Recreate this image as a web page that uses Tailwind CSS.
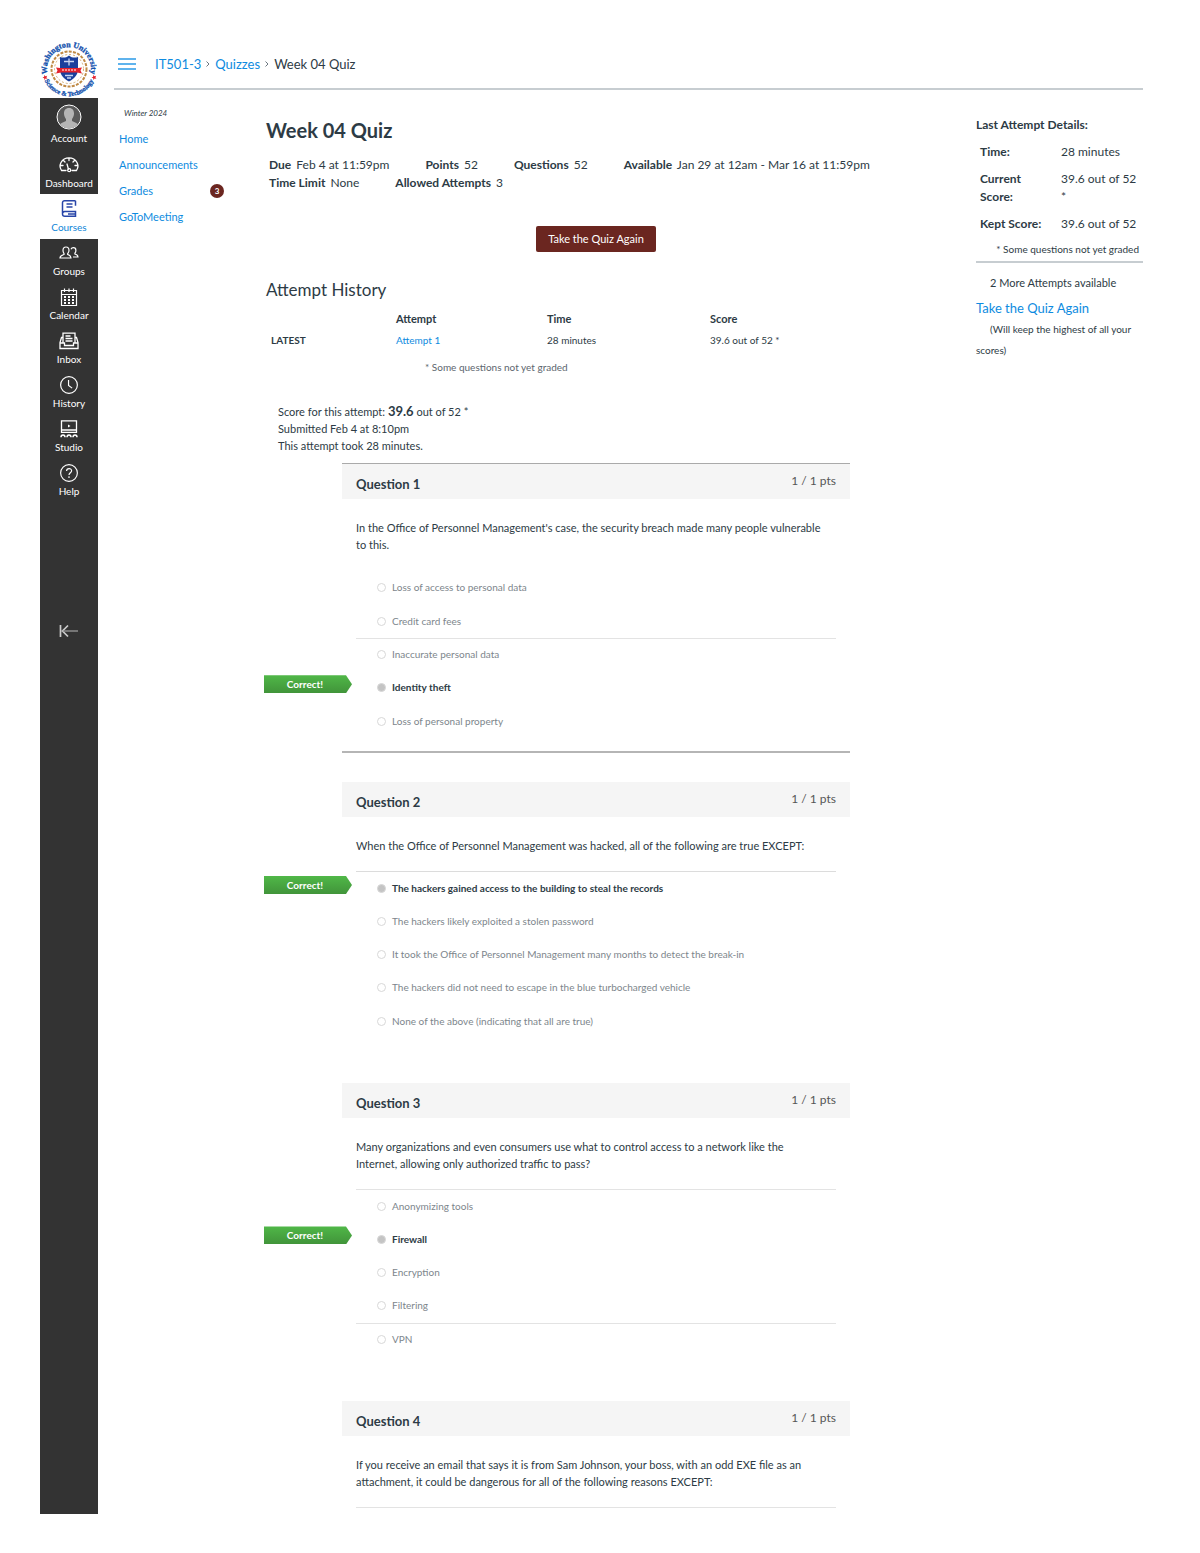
<!DOCTYPE html>
<html lang="en">
<head>
<meta charset="utf-8">
<meta name="viewport" content="width=device-width, initial-scale=1">
<title>Week 04 Quiz</title>
<script src="https://cdn.jsdelivr.net/npm/@tailwindcss/browser@4"></script>
</head>
<body class="bg-white p-10 font-['Lato',sans-serif] text-[#2d3b45]">
<div class="flex items-stretch">

  <!-- Global navigation -->
  <aside class="flex w-[58px] shrink-0 flex-col">
    <a href="#" aria-label="University home" class="block h-[58px]">
      <svg viewBox="0 0 58 58" class="h-[58px] w-[58px] overflow-visible">
        <defs>
          <path id="arcTop" d="M8.600 37.400A22 22 0 1 1 49.400 37.400"/>
          <path id="arcBottom" d="M3.500 38A27 27 0 0 0 54.500 38"/>
        </defs>
        <text font-family="Liberation Serif, serif" font-weight="700" font-size="8" fill="#1150ad" stroke="#1150ad" stroke-width=".3" text-anchor="middle"><textPath href="#arcTop" startOffset="50%">Washington University</textPath></text>
        <text font-family="Liberation Serif, serif" font-weight="700" font-size="6.500" fill="#1150ad" stroke="#1150ad" stroke-width=".3" text-anchor="middle"><textPath href="#arcBottom" startOffset="50%">Science &amp; Technology</textPath></text>
        <circle cx="29" cy="29" r="17.500" fill="none" stroke="#c08a45" stroke-width="2" stroke-dasharray="3 1.300"/>
        <circle cx="29" cy="29" r="14.500" fill="none" stroke="#d5ab73" stroke-width="1" stroke-dasharray="2 2"/>
        <path d="M29 15.500c3 2.500 6 2.500 9 1.500v12c0 6-4 10-9 12.500-5-2.500-9-6.500-9-12.500V17c3 1 6 1 9-1.500z" fill="#1a3f9c"/>
        <path d="M24 21.500h10M29 18.500v7M25 35.500h8M27 38h4" stroke="#c9d6f2" stroke-width="1.300"/>
        <path d="M16 27.500l4 .500h18l4-.500-1.500 3 1.500 3-5-1H21l-5 1 1.500-3z" fill="#e3222d"/>
        <path d="M22 30h14" stroke="#fff" stroke-width="1.200" stroke-dasharray="2 1"/>
        <path d="M4 35l1.500 1.300 1.700-.6-.8 1.600 1 1.500-1.800-.3L4.400 40l-.2-1.800-1.700-.8 1.700-.7zM53 35l1.500 1.300 1.700-.6-.8 1.600 1 1.500-1.800-.3-1.200 1.500-.2-1.800-1.700-.8 1.700-.7z" fill="#e3222d"/>
      </svg>
    </a>
    <nav aria-label="Global" class="flex grow flex-col bg-[#333] text-[10px] leading-3 text-white">
      <a href="#" class="flex h-[52px] flex-col items-center gap-[2px] pt-[6px]">
        <svg viewBox="0 0 26 26" class="h-[26px] w-[26px]"><circle cx="13" cy="13" r="12" fill="#5a5a5a" stroke="#fff"/><path d="M13 4c3.600 0 5.200 2.600 5 6-.2 2.600-1.300 4-2 5v2c2 1.300 4.600 1.300 6 3.500A12 12 0 0 1 4 20.500C5.400 18.300 8 18.300 10 17v-2c-.7-1-1.800-2.400-2-5-.2-3.400 1.400-6 5-6z" fill="#b5b5b5"/></svg>
        <span>Account</span>
      </a>
      <a href="#" class="flex h-11 flex-col items-center gap-[3px] pt-[6px]">
        <svg viewBox="0 0 20 18" class="h-[18px] w-5" fill="none" stroke="#fff" stroke-width="1.300" stroke-linecap="round"><path d="M7 14.500H2.500C.8 12 .6 9 2 6.500 3.600 3.500 6.600 1.800 10 1.800s6.400 1.700 8 4.700c1.400 2.500 1.200 5.500-.5 8H13M10 2v2.500M2 9.500h2M16 9.500h2M4.500 4.500L6 6M15.500 4.500L14 6"/><path d="M8 8l1.500 5.200"/><circle cx="10.200" cy="14.200" r="1.500"/></svg>
        <span>Dashboard</span>
      </a>
      <a href="#" class="flex h-[45px] flex-col items-center gap-[3px] bg-white pt-[5px] text-[#0e86d8]">
        <svg viewBox="0 0 18 19" class="h-[19px] w-[18px]" fill="none" stroke="#2845a8" stroke-width="1.500"><path d="M15.500 1.700H4.500a2 2 0 0 0-2 2V15a2.300 2.300 0 0 0 2.300 2.300h10.700v-4.800H4.800a2.200 2.200 0 0 0-2.300 2.200M15.500 1.700v5M6.500 5h6M6.500 8h6M8 15h7.500"/></svg>
        <span>Courses</span>
      </a>
      <a href="#" class="flex h-11 flex-col items-center gap-[3px] pt-[5px]">
        <svg viewBox="0 0 20 18" class="h-[18px] w-5" fill="none" stroke="#fff" stroke-width="1.200"><path d="M7 3c2 0 3 1.300 3 3.200 0 1.600-.5 2.600-1.300 3.300v1c1.500.7 3.300 1 3.300 3.500H1c0-2.500 2-2.800 4-3.500v-1C4.300 8.800 4 7.800 4 6.200 4 4.300 5 3 7 3z"/><path d="M12 5.200C12.500 4 13.300 3.700 14.400 3.700c1.600 0 2.500 1.100 2.500 2.700 0 1.300-.4 2.100-1 2.700v.9c1.500.5 3.100 1 3.100 3h-5"/></svg>
        <span>Groups</span>
      </a>
      <a href="#" class="flex h-11 flex-col items-center gap-[3px] pt-[5px]">
        <svg viewBox="0 0 18 18" class="h-[18px] w-[18px]" fill="none" stroke="#fff" stroke-width="1.200"><path d="M1.500 2.500h15v15h-15zM1.500 6.500h15M4.500.5v3.500M9 .5v3.500M13.500.5v3.500"/><path d="M4 9h10M4 12h10M4 15h10" stroke-width="2" stroke-dasharray="2 2"/></svg>
        <span>Calendar</span>
      </a>
      <a href="#" class="flex h-11 flex-col items-center gap-[3px] pt-[5px]">
        <svg viewBox="0 0 20 18" class="h-[18px] w-5" fill="none" stroke="#fff" stroke-width="1.300"><path d="M4 11V1.200h12V11M4 5.500H2.500l-1.500 5v6h18v-6l-1.500-5H16M1 11h4.500v2.500h9V11H19M6.500 4h5M6.500 6.500h7M6.500 9h7"/></svg>
        <span>Inbox</span>
      </a>
      <a href="#" class="flex h-11 flex-col items-center gap-[3px] pt-[5px]">
        <svg viewBox="0 0 20 20" class="h-[18px] w-5" fill="none" stroke="#fff" stroke-width="1.300"><circle cx="10" cy="10" r="9.300"/><path d="M9.500 4.500v6l4 3"/></svg>
        <span>History</span>
      </a>
      <a href="#" class="flex h-11 flex-col items-center gap-[3px] pt-[5px]">
        <svg viewBox="0 0 18 18" class="h-[18px] w-[18px]" fill="none" stroke="#fff" stroke-width="1.300"><path d="M1.500.8h15v11.500h-15zM1.500 10h15"/><path d="M8 4.500v3l2.500-1.500z" fill="#fff" stroke="none"/><path d="M1 17.300c0-3 4-3 4 0M7 17.300c0-3 4-3 4 0M13 17.300c0-3 4-3 4 0" stroke-width="1.500"/></svg>
        <span>Studio</span>
      </a>
      <a href="#" class="flex h-11 flex-col items-center gap-[3px] pt-[5px]">
        <svg viewBox="0 0 20 20" class="h-[18px] w-5" fill="none" stroke="#fff" stroke-width="1.300"><circle cx="10" cy="10" r="9.300"/><path d="M7.300 7.800c0-3.700 5.600-3.500 5.600-.3 0 2.200-2.900 2.300-2.900 4.800M10 13.700v1.800"/></svg>
        <span>Help</span>
      </a>
      <button type="button" aria-label="Minimize navigation" class="mt-[116px] flex h-6 items-center justify-center">
        <svg viewBox="0 0 20 14" class="h-[14px] w-5" fill="none" stroke="#ccc" stroke-width="1.300"><path d="M1.500 1v12M9 1.500L3.500 7 9 12.500" stroke-width="1.700"/><path d="M3.500 7H19" stroke="#999"/></svg>
      </button>
    </nav>
  </aside>

  <div class="ml-4 min-w-0 grow pr-[17px]">
    <!-- Breadcrumb -->
    <header class="flex h-[50px] items-center border-b-2 border-[#c7cdd1] text-[13px] leading-4">
      <button type="button" aria-label="Toggle course navigation" class="ml-1 flex h-4 w-[18px] items-center">
        <svg viewBox="0 0 18 12" class="h-3 w-[18px]" stroke="#2b9be8" stroke-width="1.300"><path d="M0 1h18M0 6h18M0 11h18"/></svg>
      </button>
      <nav aria-label="Breadcrumb" class="ml-[19px] flex items-center gap-[5px]">
        <a href="#" class="text-[#0e8be0]">IT501-3</a>
        <svg viewBox="0 0 4 6" class="h-[6px] w-1" fill="none" stroke="#6b7780"><path d="M.5.5L3 3 .5 5.500"/></svg>
        <a href="#" class="text-[#0e8be0]">Quizzes</a>
        <svg viewBox="0 0 4 6" class="h-[6px] w-1" fill="none" stroke="#6b7780"><path d="M.5.5L3 3 .5 5.500"/></svg>
        <span>Week 04 Quiz</span>
      </nav>
    </header>

    <div class="flex">
      <!-- Course navigation -->
      <nav aria-label="Course" class="w-[110px] shrink-0 pt-[17px] pl-[5px] text-[11px]">
        <p class="pl-[5px] text-[8px] leading-3 italic">Winter 2024</p>
        <ul class="mt-[7px] leading-[26px] text-[#0e8be0]">
          <li><a href="#">Home</a></li>
          <li><a href="#">Announcements</a></li>
          <li><a href="#" class="flex items-center justify-between">Grades <span class="flex h-[14px] w-[14px] items-center justify-center rounded-full bg-[#6b2620] text-[8px] leading-none font-bold text-white">3</span></a></li>
          <li><a href="#">GoToMeeting</a></li>
        </ul>
      </nav>

      <!-- Quiz results -->
      <main class="ml-[42px] min-w-0 grow pt-[26px]">
        <h1 class="text-[20px] leading-7 font-bold">Week 04 Quiz</h1>
        <ul class="mt-3 flex max-w-[640px] flex-wrap gap-x-9 pl-[3px] text-[12px] leading-[18px]">
          <li><b class="mr-[2px]">Due</b> Feb 4 at 11:59pm</li>
          <li><b class="mr-[2px]">Points</b> 52</li>
          <li><b class="mr-[2px]">Questions</b> 52</li>
          <li><b class="mr-[2px]">Available</b> Jan 29 at 12am - Mar 16 at 11:59pm</li>
          <li><b class="mr-[2px]">Time Limit</b> None</li>
          <li><b class="mr-[2px]">Allowed Attempts</b> 3</li>
        </ul>
        <div class="mt-[34px] flex max-w-[660px] justify-center">
          <button type="button" class="h-[26px] rounded-[2px] bg-[#6b2620] px-3 text-[11px] leading-4 text-white">Take the Quiz Again</button>
        </div>

        <h2 class="mt-[26px] text-[17px] leading-6">Attempt History</h2>
        <table class="mt-[6px] w-full max-w-[640px] table-fixed text-left text-[10px]">
          <thead class="text-[11px]">
            <tr class="h-[22px]"><th class="w-[130px]"></th><th class="w-[151px] p-0">Attempt</th><th class="w-[163px] p-0">Time</th><th class="p-0">Score</th></tr>
          </thead>
          <tbody>
            <tr class="h-5"><th class="pl-[5px] font-bold">LATEST</th><td><a href="#" class="text-[#0e8be0]">Attempt 1</a></td><td>28 minutes</td><td>39.6 out of 52 *</td></tr>
          </tbody>
        </table>
        <p class="mt-[9px] pl-[159px] text-[10px] leading-4 text-[#5c666e]">* Some questions not yet graded</p>

        <div class="mt-7 pl-3 text-[11px] leading-[17px]">
          <p>Score for this attempt: <b class="text-[13px] leading-4">39.6</b> out of 52 *</p>
          <p>Submitted Feb 4 at 8:10pm</p>
          <p>This attempt took 28 minutes.</p>
        </div>

        <div class="mt-[9px] mr-[126px] ml-[76px]">
          <section class="border-t-1 border-b-2 border-t-[#aaa] border-b-[#b5b5b5] pb-[13px]">
            <div class="flex h-[35px] justify-between bg-[#f5f5f5] px-[14px]">
              <h3 class="pt-[10px] text-[13px] leading-5 font-bold">Question 1</h3><span class="pt-[7px] text-[12px] leading-5 text-[#555]">1 / 1 pts</span>
            </div>
            <div class="px-[14px] pt-5">
              <p class="mb-[18px] text-[11px] leading-[17px]">In the Office of Personnel Management's case, the security breach made many people vulnerable<br>to this.</p>
              <div role="radiogroup" aria-label="Question 1 answers" class="grid h-[167px] auto-rows-fr text-[10px] text-[#7d868c]">
                <label class="flex items-center gap-[6px] pl-[21px]"><input type="radio" name="q1" disabled class="h-[9px] w-[9px] appearance-none rounded-full border border-[#d8d8d8]">Loss of access to personal data</label>
                <label class="flex items-center gap-[6px] pl-[21px]"><input type="radio" name="q1" disabled class="h-[9px] w-[9px] appearance-none rounded-full border border-[#d8d8d8]">Credit card fees</label>
                <label class="flex items-center gap-[6px] border-t border-[#e3e3e3] pl-[21px]"><input type="radio" name="q1" disabled class="h-[9px] w-[9px] appearance-none rounded-full border border-[#d8d8d8]">Inaccurate personal data</label>
                <label class="relative flex items-center gap-[6px] pl-[21px] font-bold text-[#2d3b45]"><span class="absolute top-1 -left-[92px] flex h-[18px] w-[88px] items-center justify-center bg-linear-to-b from-[#50b848] to-[#41943a] pr-[6px] text-[10px] text-white [clip-path:polygon(0_0,82px_0,100%_50%,82px_100%,0_100%)]">Correct!</span><input type="radio" name="q1" checked disabled class="h-[9px] w-[9px] appearance-none rounded-full border border-[#d8d8d8] bg-[#c4c4c4]">Identity theft</label>
                <label class="flex items-center gap-[6px] pl-[21px]"><input type="radio" name="q1" disabled class="h-[9px] w-[9px] appearance-none rounded-full border border-[#d8d8d8]">Loss of personal property</label>
              </div>
            </div>
          </section>

          <section class="mt-[29px]">
            <div class="flex h-[35px] justify-between bg-[#f5f5f5] px-[14px]">
              <h3 class="pt-[10px] text-[13px] leading-5 font-bold">Question 2</h3><span class="pt-[7px] text-[12px] leading-5 text-[#555]">1 / 1 pts</span>
            </div>
            <div class="px-[14px] pt-5">
              <p class="mb-[17px] text-[11px] leading-[17px]">When the Office of Personnel Management was hacked, all of the following are true EXCEPT:</p>
              <div role="radiogroup" aria-label="Question 2 answers" class="grid h-[167px] auto-rows-fr text-[10px] text-[#7d868c]">
                <label class="relative flex items-center gap-[6px] border-t border-[#dcdcdc] pl-[21px] font-bold text-[#2d3b45]"><span class="absolute top-1 -left-[92px] flex h-[18px] w-[88px] items-center justify-center bg-linear-to-b from-[#50b848] to-[#41943a] pr-[6px] text-[10px] text-white [clip-path:polygon(0_0,82px_0,100%_50%,82px_100%,0_100%)]">Correct!</span><input type="radio" name="q2" checked disabled class="h-[9px] w-[9px] appearance-none rounded-full border border-[#d8d8d8] bg-[#c4c4c4]">The hackers gained access to the building to steal the records</label>
                <label class="flex items-center gap-[6px] pl-[21px]"><input type="radio" name="q2" disabled class="h-[9px] w-[9px] appearance-none rounded-full border border-[#d8d8d8]">The hackers likely exploited a stolen password</label>
                <label class="flex items-center gap-[6px] pl-[21px]"><input type="radio" name="q2" disabled class="h-[9px] w-[9px] appearance-none rounded-full border border-[#d8d8d8]">It took the Office of Personnel Management many months to detect the break-in</label>
                <label class="flex items-center gap-[6px] pl-[21px]"><input type="radio" name="q2" disabled class="h-[9px] w-[9px] appearance-none rounded-full border border-[#d8d8d8]">The hackers did not need to escape in the blue turbocharged vehicle</label>
                <label class="flex items-center gap-[6px] pl-[21px]"><input type="radio" name="q2" disabled class="h-[9px] w-[9px] appearance-none rounded-full border border-[#d8d8d8]">None of the above (indicating that all are true)</label>
              </div>
            </div>
          </section>

          <section class="mt-[45px]">
            <div class="flex h-[35px] justify-between bg-[#f5f5f5] px-[14px]">
              <h3 class="pt-[10px] text-[13px] leading-5 font-bold">Question 3</h3><span class="pt-[7px] text-[12px] leading-5 text-[#555]">1 / 1 pts</span>
            </div>
            <div class="px-[14px] pt-5">
              <p class="mb-[17px] text-[11px] leading-[17px]">Many organizations and even consumers use what to control access to a network like the<br>Internet, allowing only authorized traffic to pass?</p>
              <div role="radiogroup" aria-label="Question 3 answers" class="grid h-[167px] auto-rows-fr text-[10px] text-[#7d868c]">
                <label class="flex items-center gap-[6px] border-t border-[#e3e3e3] pl-[21px]"><input type="radio" name="q3" disabled class="h-[9px] w-[9px] appearance-none rounded-full border border-[#d8d8d8]">Anonymizing tools</label>
                <label class="relative flex items-center gap-[6px] pl-[21px] font-bold text-[#2d3b45]"><span class="absolute top-1 -left-[92px] flex h-[18px] w-[88px] items-center justify-center bg-linear-to-b from-[#50b848] to-[#41943a] pr-[6px] text-[10px] text-white [clip-path:polygon(0_0,82px_0,100%_50%,82px_100%,0_100%)]">Correct!</span><input type="radio" name="q3" checked disabled class="h-[9px] w-[9px] appearance-none rounded-full border border-[#d8d8d8] bg-[#c4c4c4]">Firewall</label>
                <label class="flex items-center gap-[6px] pl-[21px]"><input type="radio" name="q3" disabled class="h-[9px] w-[9px] appearance-none rounded-full border border-[#d8d8d8]">Encryption</label>
                <label class="flex items-center gap-[6px] pl-[21px]"><input type="radio" name="q3" disabled class="h-[9px] w-[9px] appearance-none rounded-full border border-[#d8d8d8]">Filtering</label>
                <label class="flex items-center gap-[6px] border-t border-[#e3e3e3] pl-[21px]"><input type="radio" name="q3" disabled class="h-[9px] w-[9px] appearance-none rounded-full border border-[#d8d8d8]">VPN</label>
              </div>
            </div>
          </section>

          <section class="mt-[45px] pb-[6px]">
            <div class="flex h-[35px] justify-between bg-[#f5f5f5] px-[14px]">
              <h3 class="pt-[10px] text-[13px] leading-5 font-bold">Question 4</h3><span class="pt-[7px] text-[12px] leading-5 text-[#555]">1 / 1 pts</span>
            </div>
            <div class="px-[14px] pt-5">
              <p class="border-b border-[#e3e3e3] pb-[17px] text-[11px] leading-[17px]">If you receive an email that says it is from Sam Johnson, your boss, with an odd EXE file as an<br>attachment, it could be dangerous for all of the following reasons EXCEPT:</p>
            </div>
          </section>
        </div>
      </main>

      <!-- Attempt summary -->
      <aside class="w-[167px] shrink-0 pt-[25px] text-[12px]">
        <h2 class="text-[12px] leading-5 font-bold">Last Attempt Details:</h2>
        <table class="mt-2 w-full text-left align-top leading-[18px]">
          <tbody class="align-top">
            <tr><th class="w-[85px] pb-[9px] pl-1">Time:</th><td>28 minutes</td></tr>
            <tr><th class="pb-[9px] pl-1">Current<br>Score:</th><td>39.6 out of 52<br>*</td></tr>
            <tr><th class="pl-1">Kept Score:</th><td>39.6 out of 52</td></tr>
          </tbody>
        </table>
        <p class="mt-2 border-b-2 border-[#c7cdd1] pr-1 pb-1 text-right text-[10px] leading-4">* Some questions not yet graded</p>
        <p class="mt-[10px] pl-[14px] text-[11px] leading-5">2 More Attempts available</p>
        <p class="mt-[5px] leading-5"><a href="#" class="text-[13px] text-[#0e8be0]">Take the Quiz Again</a></p>
        <p class="indent-[14px] text-[10px] leading-[21px]">(Will keep the highest of all your scores)</p>
      </aside>
    </div>
  </div>
</div>
</body>
</html>
